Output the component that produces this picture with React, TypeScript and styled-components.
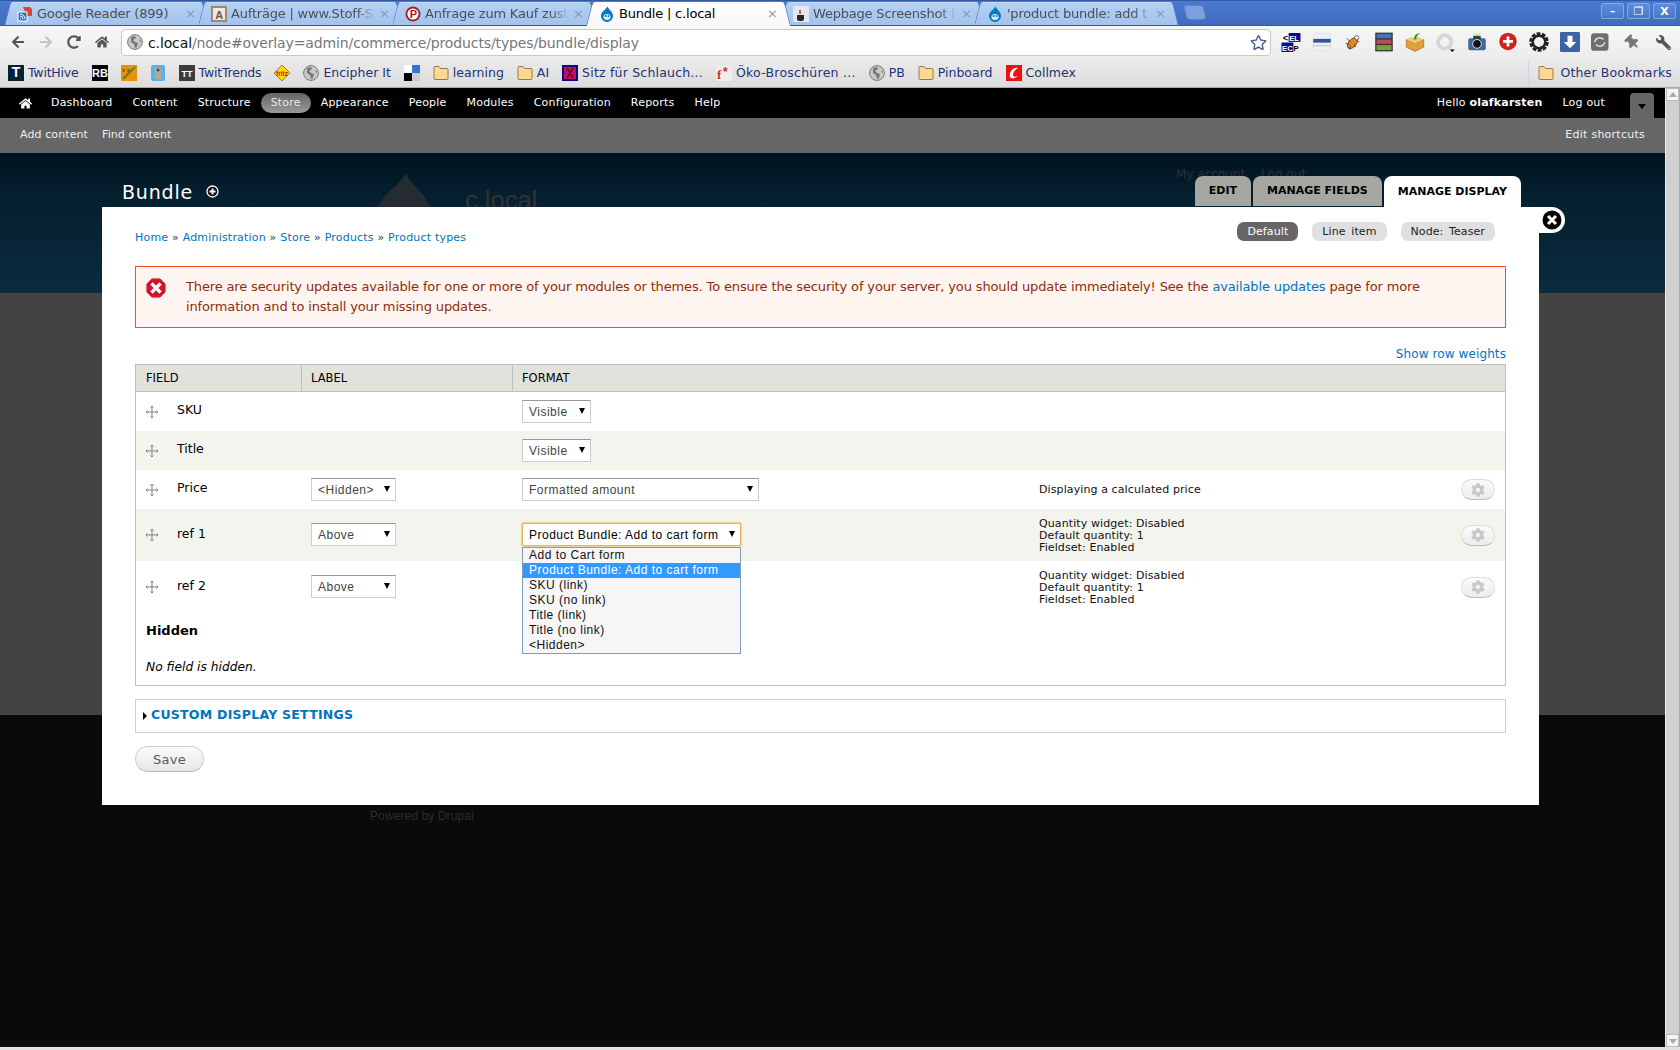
import React from "react";
import styled, { createGlobalStyle, css } from "styled-components";
import { FaHome, FaCog, FaWrench, FaThumbtack, FaArrowLeft, FaArrowRight, FaRedoAlt, FaRegStar } from "react-icons/fa";

const SANS = `"DejaVu Sans", Verdana, sans-serif`;
const ARIAL = `"Liberation Sans", Arial, sans-serif`;

const Global = createGlobalStyle`
  html, body { margin: 0; padding: 0; background: #0a0a0a; }
  * { box-sizing: border-box; }
  body { font-family: ${SANS}; overflow: hidden; }
`;

const Shell = styled.div`
  width: 1680px; height: 1050px; display: flex; flex-direction: column; overflow: hidden;
`;

/* ---------- browser chrome ---------- */
const TabStrip = styled.div`
  height: 26px; flex: none; display: flex; align-items: flex-end; padding: 0 4px 0 7px;
  background: linear-gradient(#4a79cd, #3f6cc0);
  border-top: 1px solid #2f5aa8;
  border-bottom: 1px solid #36589c;
`;
const BrowserTab = styled.div<{ $active?: boolean }>`
  width: 199px; height: 23px; margin-right: -5px; flex: none; position: relative;
  display: flex; align-items: center; gap: 4px; padding: 0 11px 0 10px;
  isolation: isolate; z-index: ${(p) => (p.$active ? 2 : 1)};
  font-size: 13px; letter-spacing: -.2px; color: ${(p) => (p.$active ? "#000" : "#4a4f58")};
  &::before, &::after {
    content: ""; position: absolute; top: 0; bottom: ${(p) => (p.$active ? "-1px" : "0")}; width: 55%; z-index: -1;
    background: ${(p) => (p.$active ? "linear-gradient(#fff, #f7f7f7)" : "linear-gradient(#b4d0f4, #a2c3ee)")};
    border-top: 1px solid ${(p) => (p.$active ? "#fff" : "#c8dcf6")};
  }
  &::before { left: 0; transform: skewX(-14deg); border-radius: 4px 0 0 0; border-left: 1px solid #5f86cc; }
  &::after { right: 0; transform: skewX(14deg); border-radius: 0 4px 0 0; border-right: 1px solid #5f86cc; }
`;
const TabLabel = styled.span<{ $fade?: boolean }>`
  flex: 1; min-width: 0; overflow: hidden; white-space: nowrap;
  ${(p) => p.$fade && css`mask-image: linear-gradient(to right, #000 88%, transparent 100%);`}
`;
const TabClose = styled.span`
  flex: none; width: 10px; text-align: center; font-size: 13px; color: #8d96a6; line-height: 1;
`;
const NewTab = styled.div`
  width: 20px; height: 15px; margin: 0 0 5px 14px; flex: none;
  background: #7c9fdd; border: 1px solid #5c82c8; border-radius: 3px 3px 4px 4px;
  transform: skewX(14deg);
`;
const WindowButtons = styled.div`
  margin-left: auto; align-self: flex-start; margin-top: 2px; display: flex; gap: 3px;
`;
const WindowButton = styled.div`
  width: 23px; height: 16px; display: flex; align-items: center; justify-content: center;
  background: linear-gradient(#5e8ed8, #4777c8); border: 1px solid #86a8e0; border-radius: 2px;
  color: #fff; font-size: 11px; font-weight: 700; line-height: 1;
`;

const Toolbar = styled.div`
  height: 32px; flex: none; display: flex; align-items: center; padding-left: 10px;
  background: linear-gradient(#f7f7f7, #ececec);
`;
const NavButton = styled.span<{ $dim?: boolean }>`
  width: 15px; margin-right: 13px; display: flex; justify-content: center;
  color: ${(p) => (p.$dim ? "#c4c4c4" : "#555")}; font-size: 14px;
`;
const Omnibox = styled.div`
  width: 1150px; height: 27px; margin-left: -1px; display: flex; align-items: center; gap: 5px; padding: 0 5px;
  background: #fff; border: 1px solid #c8c8c8; border-radius: 4px; font-size: 14px; letter-spacing: -.12px;
`;
const UrlHost = styled.span`color: #111;`;
const UrlPath = styled.span`color: #777;`;
const UrlText = styled.div`flex: 1; white-space: nowrap; padding-top: 1px;`;
const StarIcon = styled(FaRegStar)`color: #46618f; font-size: 17px; margin-right: -2px;`;
const Extensions = styled.div`margin-left: 10px; display: flex; gap: 11px; align-items: center;`;
const ExtIcon = styled.span`width: 20px; height: 20px; display: flex; align-items: center; justify-content: center; font-size: 15px;`;
const PinExt = styled(FaThumbtack)`color: #777; transform: rotate(-45deg);`;
const WrenchExt = styled(FaWrench)`color: #555; transform: scaleX(-1);`;

const BookmarkBar = styled.div`
  height: 30px; flex: none; display: flex; align-items: center; gap: 13px; padding: 0 8px;
  background: linear-gradient(#ebebeb, #dcdcdc);
  border-bottom: 1px solid #a8a8a8;
  font-size: 12.5px; color: #1d3372;
`;
const Bookmark = styled.div`display: flex; align-items: center; gap: 4px; white-space: nowrap;`;
const BookmarkLabel = styled.span<{ $sp?: number }>`letter-spacing: ${(p) => p.$sp ?? 0}px;`;
const OtherBookmarks = styled(Bookmark)`
  margin-left: auto; height: 22px; padding-left: 9px; border-left: 1px solid #ccd3e2; gap: 6px;
`;

/* ---------- page ---------- */
const Viewport = styled.div`flex: 1; min-height: 0; display: flex;`;
const PageArea = styled.div`flex: 1; min-width: 0; display: flex; flex-direction: column;`;
const AdminBar = styled.div`
  height: 30px; flex: none; background: #000; color: #fff; font-size: 11px; letter-spacing: .2px;
  display: flex; align-items: center;
`;
const AdminHome = styled.span`display: flex; width: 14px; margin: 0 8px 0 19px; font-size: 13px;`;
const AdminLink = styled.span<{ $active?: boolean }>`
  padding: 0 10px 1px; height: 20px; display: flex; align-items: center; white-space: nowrap;
  border-radius: 10px;
  ${(p) => p.$active && css`background: linear-gradient(#666, #999); color: #e8e8e8;`}
`;
const AdminRight = styled.div`margin-left: auto; display: flex; align-items: center; height: 100%;`;
const AdminUser = styled.span`padding: 0 10px 2px;`;
const AdminDrop = styled.div`
  width: 24px; height: 25px; margin: 5px 11px 0 15px; background: #666; border-radius: 4px 4px 0 0;
  display: flex; align-items: center; justify-content: center;
  &::after { content: ""; border: 4px solid transparent; border-top: 5px solid #000; margin-top: 5px; }
`;
const ShortcutBar = styled.div`
  height: 35px; flex: none; background: #666; color: #f0f0f0; font-size: 11px; letter-spacing: .1px;
  display: flex; align-items: center; gap: 14px; padding: 0 20px 2px;
`;
const ShortcutEdit = styled.span`margin-left: auto; letter-spacing: .25px;`;

const Backdrop = styled.div`flex: 1; min-height: 0; position: relative; display: flex; flex-direction: column;`;
const SiteHeader = styled.div`
  height: 140px; flex: none; display: flex; align-items: flex-start; padding-left: 375px;
  background: linear-gradient(#00121f 0%, #05202f 30%, #0b2b3f 100%);
`;
const SiteLogo = styled.svg`width: 58px; height: 66px; margin-top: 20px; flex: none;`;
const SiteName = styled.div`
  margin: 33px 0 0 32px; font-family: ${ARIAL}; font-size: 25.5px; line-height: 28px; color: #333;
`;
const SecondaryLinks = styled.div`
  margin: 14px 0 0 auto; padding-right: 359px; display: flex; gap: 16px; font-size: 12px; line-height: 14px; color: #303030;
`;
const SiteBody = styled.div`height: 422px; flex: none; background: #434343;`;
const SiteFooter = styled.div`
  flex: 1; background: #0a0a0a; padding: 94px 0 0 370px;
  font-family: ${ARIAL}; font-size: 12px; line-height: 14px; letter-spacing: .1px; color: #2b2b2b;
`;

const Overlay = styled.div`
  position: absolute; left: 102px; top: 23px; width: 1437px; display: flex; flex-direction: column;
`;
const OverlayHead = styled.div`
  height: 31px; display: flex; justify-content: space-between; align-items: flex-end; padding: 0 18px 0 20px;
`;
const PageTitle = styled.div`
  display: flex; align-items: center; gap: 13px; align-self: center;
  font-size: 19px; letter-spacing: .8px; color: #fff; line-height: 24px;
`;
const OverlayTabs = styled.div`display: flex; gap: 2px; align-items: flex-end;`;
const OverlayTab = styled.div<{ $active?: boolean }>`
  height: ${(p) => (p.$active ? "31px" : "30px")}; margin-bottom: ${(p) => (p.$active ? "0" : "1px")};
  padding: 0 14px 1px; display: flex; align-items: center; border-radius: 8px 8px 0 0;
  font-size: 11px; font-weight: 700; color: #000; white-space: nowrap;
  background: ${(p) => (p.$active ? "#fff" : "#a6a7a2")};
`;

const Modal = styled.div`
  position: relative; background: #fff; padding: 0 33px 33px; font-size: 13px; color: #000;
`;
const CloseTab = styled.div`
  position: absolute; left: 100%; top: 0; width: 26px; height: 26px; background: #fff;
  border-radius: 0 13px 13px 0; display: flex; align-items: center; padding-left: 3px;
`;
const ModalHead = styled.div`
  height: 59px; padding: 15px 11px 0 0; display: flex; justify-content: space-between; align-items: flex-start;
`;
const Breadcrumb = styled.div`
  margin-top: 8px; font-size: 11px; line-height: 16px; color: #333; letter-spacing: .2px;
`;
const Link = styled.a`color: #0074bd; text-decoration: none;`;
const Pills = styled.div`display: flex; gap: 14px;`;
const Pill = styled.div<{ $active?: boolean }>`
  height: 19px; padding: 0 10px; display: flex; align-items: center; border-radius: 7px;
  font-size: 11px; letter-spacing: .1px; word-spacing: 2px;
  background: ${(p) => (p.$active ? "#666" : "#e0e0e0")}; color: ${(p) => (p.$active ? "#fff" : "#222")};
`;
const ErrorBox = styled.div`
  height: 62px; display: flex; gap: 19px; padding: 10px 60px 10px 9px;
  background: #fef5f1; border: 1px solid #ed541d; color: #8c2e0b;
  font-size: 13px; line-height: 20px; letter-spacing: -.14px;
`;
const ErrorText = styled.div`flex: 1;`;
const ErrorIcon = styled.svg`width: 22px; height: 22px; flex: none;`;
const WeightsRow = styled.div`
  margin: 18px 0 2px; text-align: right; font-size: 12px; line-height: 16px; letter-spacing: .1px;
`;
const TableBox = styled.div`border: 1px solid #bebfb9;`;
const GRID = "165px 211px 517px 1fr 54px";
const HeadRow = styled.div`
  height: 27px; display: grid; grid-template-columns: 165px 211px 1fr; background: #e1e2dc;
  border-bottom: 1px solid #bebfb9;
`;
const HeadCell = styled.div`
  padding: 0 10px; display: flex; align-items: center; font-size: 11.5px;
  & + & { border-left: 1px solid #bebfb9; padding-left: 9px; }
`;
const Row = styled.div<{ $even?: boolean }>`
  display: grid; grid-template-columns: ${GRID}; align-items: center; padding: 8px 0;
  background: ${(p) => (p.$even ? "#f3f4ee" : "#fff")};
`;
const FieldCell = styled.div`
  display: flex; align-items: center; padding-left: 9px; gap: 18px; font-size: 12.5px;
`;
const FieldName = styled.span`margin-top: -4px;`;
const Cell = styled.div<{ $tall?: boolean }>`
  padding-left: 10px;
  ${(p) => p.$tall && css`padding-bottom: 1px;`}
`;
const Summary = styled.div<{ $tall?: boolean }>`
  padding-left: 10px; font-size: 11px; line-height: 12px; color: #111; letter-spacing: .1px;
  ${(p) => p.$tall && css`padding-top: 1px; margin-bottom: -1px;`}
`;
const GearCell = styled.div`display: flex; justify-content: flex-end; padding-right: 10px;`;
const GearButton = styled.div`
  width: 34px; height: 21px; border-radius: 11px; display: flex; align-items: center; justify-content: center;
  background: linear-gradient(#fbfbfb, #ececec); border: 1px solid #dcdcdc; border-bottom-color: #bbb;
  color: #c8c8c8; font-size: 14px;
`;
const SelectWrap = styled.div<{ $w: number }>`position: relative; width: ${(p) => p.$w}px;`;
const SelectBox = styled.div<{ $focus?: boolean }>`
  height: 23px; display: flex; align-items: center; justify-content: space-between;
  padding: 0 6px; background: #fff; font-family: ${ARIAL}; font-size: 12px; white-space: nowrap; letter-spacing: .5px;
  border: 1px solid #ccc; border-top-color: #999;
  color: ${(p) => (p.$focus ? "#000" : "#444")};
  ${(p) => p.$focus && css`border-color: #e0b860; box-shadow: 0 0 1px 1px #ecd08c; border-radius: 2px;`}
  &::after { content: ""; flex: none; border: 3.5px solid transparent; border-top: 6px solid #000; border-bottom: 0; margin-bottom: 2px; margin-right: -1px; }
`;
const Dropdown = styled.div`
  position: absolute; z-index: 5; left: 0; top: 100%; width: 100%; margin-top: 1px;
  background: #f6f6f6; border: 1px solid #7f9db9; font-family: ${ARIAL}; font-size: 12px; letter-spacing: .5px; color: #111;
`;
const Option = styled.div<{ $selected?: boolean }>`
  height: 15px; line-height: 15px; padding: 0 5px 0 6px; white-space: nowrap;
  ${(p) => p.$selected && css`background: #3399ff; color: #fff;`}
`;
const HiddenBlock = styled.div`padding: 8px 10px 8px; font-size: 13px; line-height: 20px;`;
const HiddenTitle = styled.div`font-weight: 700;`;
const HiddenNote = styled.div`margin-top: 16px; font-style: italic; font-size: 12.25px;`;
const Fieldset = styled.div`
  margin-top: 13px; height: 34px; border: 1px solid #ccc; display: flex; align-items: center; gap: 4px; padding: 0 0 4px 7px;
`;
const Caret = styled.span`border: 4px solid transparent; border-left: 4px solid #000; border-right: 0; flex: none; margin-top: 3px;`;
const FieldsetLink = styled(Link)`font-size: 12.5px; font-weight: 700; letter-spacing: .25px;`;
const SaveButton = styled.div`
  margin-top: 13px; width: 69px; height: 26px; border-radius: 13px; display: flex; align-items: center; justify-content: center;
  background: linear-gradient(#fbfbfb, #e6e6e6); border: 1px solid #d0d0d0; border-bottom-color: #b8b8b8;
  color: #5a5a5a; font-size: 13px; letter-spacing: .3px;
`;

const Scrollbar = styled.div`
  width: 15px; flex: none; display: flex; flex-direction: column; background: #d0d0d0;
  border-left: 1px solid #ececec; border-right: 1px solid #aaa;
`;
const ScrollButton = styled.div<{ $down?: boolean }>`
  height: 13px; background: #f4f4f4; border: 1px solid #bbb; flex: none; display: flex; align-items: center; justify-content: center;
  &::after { content: ""; border: 4px solid transparent;
    ${(p) => (p.$down ? "border-top: 5px solid #aaa; margin-top: 5px;" : "border-bottom: 5px solid #aaa; margin-bottom: 5px;")} }
`;
const ScrollTrack = styled.div`flex: 1;`;
const FooterStrip = styled.div`height: 3px; flex: none; background: #e2e2e2;`;

/* ---------- icons ---------- */
const Ico: React.FC<{ children: React.ReactNode; w?: number; h?: number }> = ({ children, w = 16, h = 16 }) => (
  <svg width={w} height={h} viewBox="0 0 16 16" style={{ flex: "none", display: "block" }}>{children}</svg>
);
const Drop = ({ size = 16 }: { size?: number }) => (
  <Ico w={size} h={size}>
    <path d="M8.5 .5C9.5 3.5 14 5.500 14 10a6 6 0 0 1-12 0C2 5.500 7 3.500 8.500 .5Z" fill="#0678be" />
    <ellipse cx="8" cy="11" rx="3.600" ry="3" fill="#d8ecf8" />
    <circle cx="6.700" cy="10" r="1" fill="#0678be" /><circle cx="9.500" cy="10" r="1" fill="#0678be" />
  </Ico>
);
const Globe = () => (
  <Ico>
    <circle cx="8" cy="8" r="7.400" fill="#c9c9c9" stroke="#777" />
    <path d="M4 3l4-1 1 2-3 2 2 2 3 1-1 4-2 1-1-4-3-2zM12 5l2 2-1 1z" fill="#777" />
  </Ico>
);
const Folder = () => (
  <Ico>
    <path d="M1 4.500V13.500a1 1 0 0 0 1 1h12a1 1 0 0 0 1-1V4.500a1 1 0 0 0-1-1H7.500L6 1.500H2a1 1 0 0 0-1 1z" fill="#fcd893" stroke="#987a45" />
  </Ico>
);
const Tile: React.FC<{ bg: string; fg?: string; t: string; fs?: number }> = ({ bg, fg = "#fff", t, fs = 11 }) => (
  <Ico>
    <rect x="0" y="0" width="16" height="16" fill={bg} />
    <text x="8" y="12" textAnchor="middle" fontSize={fs} fontWeight="700" fontFamily="Liberation Sans" fill={fg}>{t}</text>
  </Ico>
);
const ReaderIcon = () => (
  <Ico>
    <path d="M6 1h7l2 2v7h-5z" fill="#e2432f" />
    <rect x="1" y="6" width="9" height="9" fill="#2b74c8" stroke="#fff" />
    <path d="M3 13h1M3 10a3 3 0 0 1 3 3M3 8a5 5 0 0 1 5 5" stroke="#fff" fill="none" />
  </Ico>
);
const AIcon = () => (
  <Ico>
    <rect width="16" height="16" fill="#a08870" />
    <rect x="2" y="2" width="12" height="12" fill="#efeadf" />
    <text x="8" y="12.500" textAnchor="middle" fontSize="11" fontWeight="700" fontFamily="Liberation Sans" fill="#6d5640">A</text>
  </Ico>
);
const PinIcon = () => (
  <Ico>
    <circle cx="8" cy="8" r="7.500" fill="#a51c30" />
    <circle cx="8" cy="8" r="5.600" fill="#fff" />
    <text x="8.300" y="12" textAnchor="middle" fontSize="11" fontWeight="700" fontFamily="Liberation Sans" fill="#a51c30">P</text>
  </Ico>
);
const CupIcon = () => (
  <Ico>
    <rect width="16" height="16" fill="#e4e7ee" />
    <path d="M4 9h7v4a2 2 0 0 1-2 2H6a2 2 0 0 1-2-2z" fill="#2c2420" />
    <path d="M7 8V4" stroke="#a33" strokeWidth="1.500" />
  </Ico>
);
const OwlIcon = () => (
  <Ico>
    <rect x="1" y="0" width="14" height="16" rx="2" fill="#58b4e8" />
    <path d="M5 3h6v11H5z" fill="#b9a98c" />
    <circle cx="8" cy="5" r="1.500" fill="#445" />
  </Ico>
);
const SwordIcon = () => (
  <Ico>
    <rect width="16" height="16" fill="#e8920c" />
    <path d="M2 14L14 2" stroke="#6a7a20" strokeWidth="2" />
    <text x="1" y="7" fontSize="6" fontFamily="Liberation Sans" fill="#222">x x</text>
  </Ico>
);
const FritzIcon = () => (
  <Ico>
    <path d="M8 0l8 8-8 8-8-8z" fill="#ffd800" stroke="#333" strokeWidth=".5" />
    <text x="8" y="10.500" textAnchor="middle" fontSize="6.500" fontWeight="700" fontFamily="Liberation Sans" fill="#d01818">fritz</text>
  </Ico>
);
const DeliciousIcon = () => (
  <Ico>
    <rect x="8" width="8" height="8" fill="#3274d1" />
    <rect y="8" width="8" height="8" fill="#000" />
    <rect x="8" y="8" width="8" height="8" fill="#ccc" />
    <rect width="8" height="8" fill="#fff" />
  </Ico>
);
const HourglassIcon = () => (
  <Ico>
    <rect width="16" height="16" fill="#0a0a80" />
    <rect x="2" y="2" width="12" height="12" fill="#c01060" />
    <path d="M5 3l6 10M11 3L5 13" stroke="#600830" strokeWidth="1.500" />
  </Ico>
);
const FStarIcon = () => (
  <Ico>
    <rect width="16" height="16" fill="#eee" />
    <text x="1" y="14" fontSize="13" fontWeight="700" fontFamily="Liberation Serif" fill="#c32">f</text>
    <text x="7" y="11" fontSize="12" fontWeight="700" fontFamily="Liberation Sans" fill="#d22">*</text>
  </Ico>
);
const CollmexIcon = () => (
  <Ico>
    <rect width="16" height="16" fill="#f01010" />
    <path d="M12 3C7 2 3 7 4 12c1 2 5 2 8-1-3 1-5 1-5-1 0-3 2-5 5-7z" fill="#fff" />
  </Ico>
);
const SelectIcon = () => (
  <Ico w={20} h={19}>
    <rect x="0" y="0" width="16" height="8" fill="#fff" />
    <rect x="6" y="0" width="10" height="7.500" fill="#0a0a90" />
    <text x="1" y="7" fontSize="7.500" fontWeight="700" fontFamily="Liberation Mono" fill="#000">&lt;</text>
    <text x="6.500" y="6.500" fontSize="6.500" fontWeight="700" fontFamily="Liberation Sans" fill="#fff">EL</text>
    <rect x="0" y="8" width="10" height="8" fill="#0a0a90" />
    <text x=".5" y="15" fontSize="6.500" fontWeight="700" fontFamily="Liberation Sans" fill="#fff">EC</text>
    <text x="10" y="15" fontSize="6.500" fontWeight="700" fontFamily="Liberation Sans" fill="#000">P</text>
  </Ico>
);
const StripeIcon = () => (
  <Ico w={20} h={20}>
    <rect x="1" y="1" width="14" height="14" rx="1.500" fill="#f0f0f0" stroke="#ddd" strokeWidth=".6" />
    <rect x="1" y="5.500" width="14" height="3" fill="#2c55a8" />
    <path d="M1 11h14" stroke="#ccc" />
  </Ico>
);
const BugIcon = () => (
  <Ico w={20} h={20}>
    <ellipse cx="7.500" cy="9" rx="3" ry="5" transform="rotate(40 7.500 9)" fill="#e0872a" stroke="#6a3a10" strokeWidth=".7" />
    <circle cx="11" cy="4.500" r="1.700" fill="#eee" stroke="#333" strokeWidth=".5" />
    <path d="M3 5l3 3M2 9l3 1M5 14l1-3M10 12l-1-2M13 8l-2-1" stroke="#5a3010" strokeWidth=".6" />
  </Ico>
);
const BooksIcon = () => (
  <Ico w={20} h={20}>
    <rect x="1" y="0.500" width="14" height="15" fill="#333" />
    <rect x="2" y="1.500" width="12" height="3.500" fill="#3a78b8" />
    <rect x="2" y="6" width="12" height="3.500" fill="#c2485e" />
    <rect x="2" y="10.500" width="12" height="4" fill="#7da23a" />
  </Ico>
);
const BoxIcon = () => (
  <Ico w={20} h={20}>
    <path d="M1 6l7 3 7-3v6l-7 3.500L1 12z" fill="#e2a03c" stroke="#a86e20" strokeWidth=".6" />
    <path d="M1 6l4-2 3 1 3-1 4 2-7 3z" fill="#f1c87a" />
    <path d="M7 6c0-3 2-5 5-5-2 1-3 3-3 5z" fill="#3a9a2a" />
  </Ico>
);
const RingIcon = () => (
  <Ico w={20} h={20}>
    <circle cx="7" cy="8" r="5.300" fill="none" stroke="#d6d6d6" strokeWidth="3" />
    <path d="M11 14h4l-2 2z" fill="#000" />
  </Ico>
);
const CameraIcon = () => (
  <Ico w={20} h={20}>
    <path d="M5 1l3 1 3-1" stroke="#f0dc70" fill="none" />
    <rect x="1" y="5" width="14" height="9.500" rx="1.500" fill="#3f6a98" />
    <rect x="5" y="3" width="6" height="3" fill="#27405e" />
    <circle cx="8" cy="9.500" r="3.500" fill="#111" stroke="#dde" strokeWidth=".8" />
  </Ico>
);
const PlusIcon = () => (
  <Ico w={20} h={20}>
    <circle cx="8" cy="7.500" r="7" fill="#d3221a" />
    <path d="M8 3.500v8M4 7.500h8" stroke="#fff" strokeWidth="2.200" />
  </Ico>
);
const RingGear = () => (
  <Ico w={20} h={20}>
    <circle cx="8" cy="8" r="6.600" fill="none" stroke="#222" strokeWidth="2.400" strokeDasharray="3 1.150" />
    <circle cx="8" cy="8" r="5" fill="none" stroke="#222" strokeWidth="2" />
    <circle cx="8" cy="8" r="2.300" fill="#eee" />
  </Ico>
);
const DownloadIcon = () => (
  <Ico w={20} h={20}>
    <rect x="0" y="0" width="16" height="16" rx="1" fill="#3c62a8" />
    <path d="M6 3h4v5h3l-5 5-5-5h3z" fill="#fff" />
  </Ico>
);
const SyncIcon = () => (
  <Ico w={20} h={20}>
    <rect x="0" y="1" width="14" height="14" rx="2.500" fill="#6e6e6e" />
    <path d="M3 8a4 4 0 0 1 7-2M11 8a4 4 0 0 1-7 2" stroke="#ddd" fill="none" strokeWidth="1.300" />
    <path d="M2 9h8" stroke="#6e6e6e" strokeWidth=".8" />
  </Ico>
);
const MoveHandle = () => (
  <Ico w={14} h={14}>
    <g transform="scale(1.140)" fill="none" stroke="#808080" strokeWidth="1">
      <path d="M7 1v12M1 7h12" />
      <path d="M5.500 2.500L7 1l1.500 1.500M5.500 11.500L7 13l1.500-1.500M2.500 5.500L1 7l1.500 1.500M11.500 5.500L13 7l-1.500 1.500" />
    </g>
  </Ico>
);

/* ---------- data ---------- */
const tabs: { icon: React.ReactNode; label: string; fade?: boolean; active?: boolean }[] = [
  { icon: <ReaderIcon />, label: "Google Reader (899)" },
  { icon: <AIcon />, label: "Aufträge | www.Stoff-S", fade: true },
  { icon: <PinIcon />, label: "Anfrage zum Kauf zust", fade: true },
  { icon: <Drop />, label: "Bundle | c.local", active: true },
  { icon: <CupIcon />, label: "Wepbage Screenshot i", fade: true },
  { icon: <Drop />, label: "'product bundle: add t", fade: true },
];
const bookmarks: { icon: React.ReactNode; label?: string; sp?: number }[] = [
  { icon: <Tile bg="#06223a" t="T" fs={14} />, label: "TwitHive", sp: -0.2 },
  { icon: <Tile bg="#000" t="RB" fs={11} /> },
  { icon: <SwordIcon /> },
  { icon: <OwlIcon /> },
  { icon: <Tile bg="#3c3c3c" t="TT" fs={9} />, label: "TwitTrends", sp: -0.2 },
  { icon: <FritzIcon /> },
  { icon: <Globe />, label: "Encipher It" },
  { icon: <DeliciousIcon /> },
  { icon: <Folder />, label: "learning" },
  { icon: <Folder />, label: "AI" },
  { icon: <HourglassIcon />, label: "Sitz für Schlauch...", sp: 0.2 },
  { icon: <FStarIcon />, label: "Öko-Broschüren ...", sp: 0.25 },
  { icon: <Globe />, label: "PB" },
  { icon: <Folder />, label: "Pinboard" },
  { icon: <CollmexIcon />, label: "Collmex" },
];
const adminLinks = ["Dashboard", "Content", "Structure", "Store", "Appearance", "People", "Modules", "Configuration", "Reports", "Help"];
const options = ["Add to Cart form", "Product Bundle: Add to cart form", "SKU (link)", "SKU (no link)", "Title (link)", "Title (no link)", "<Hidden>"];
const bundleSummary = ["Quantity widget: Disabled", "Default quantity: 1", "Fieldset: Enabled"];
const rows: {
  name: string; label?: string; format: string; fw: number; summary?: string[]; open?: boolean;
}[] = [
  { name: "SKU", format: "Visible", fw: 69 },
  { name: "Title", format: "Visible", fw: 69 },
  { name: "Price", label: "<Hidden>", format: "Formatted amount", fw: 237, summary: ["Displaying a calculated price"] },
  { name: "ref 1", label: "Above", format: "Product Bundle: Add to cart form", fw: 219, summary: bundleSummary, open: true },
  { name: "ref 2", label: "Above", format: "Product Bundle: Add to cart form", fw: 219, summary: bundleSummary },
];

export default function App() {
  return (
    <Shell>
      <Global />
      <TabStrip>
        {tabs.map((t) => (
          <BrowserTab key={t.label} $active={t.active}>
            {t.icon}
            <TabLabel $fade={t.fade}>{t.label}</TabLabel>
            <TabClose>×</TabClose>
          </BrowserTab>
        ))}
        <NewTab />
        <WindowButtons>
          <WindowButton>–</WindowButton>
          <WindowButton>❐</WindowButton>
          <WindowButton>X</WindowButton>
        </WindowButtons>
      </TabStrip>

      <Toolbar>
        <NavButton><FaArrowLeft /></NavButton>
        <NavButton $dim><FaArrowRight /></NavButton>
        <NavButton><FaRedoAlt /></NavButton>
        <NavButton><FaHome /></NavButton>
        <Omnibox>
          <Globe />
          <UrlText><UrlHost>c.local</UrlHost><UrlPath>/node#overlay=admin/commerce/products/types/bundle/display</UrlPath></UrlText>
          <StarIcon />
        </Omnibox>
        <Extensions>
          <SelectIcon /><StripeIcon /><BugIcon /><BooksIcon /><BoxIcon /><RingIcon /><CameraIcon /><PlusIcon /><RingGear /><DownloadIcon /><SyncIcon />
          <ExtIcon><PinExt /></ExtIcon>
          <ExtIcon><WrenchExt /></ExtIcon>
        </Extensions>
      </Toolbar>

      <BookmarkBar>
        {bookmarks.map((b, i) => (
          <Bookmark key={i}>{b.icon}{b.label && <BookmarkLabel $sp={b.sp}>{b.label}</BookmarkLabel>}</Bookmark>
        ))}
        <OtherBookmarks><Folder /><BookmarkLabel $sp={0.15}>Other Bookmarks</BookmarkLabel></OtherBookmarks>
      </BookmarkBar>

      <Viewport>
        <PageArea>
          <AdminBar>
            <AdminHome><FaHome /></AdminHome>
            {adminLinks.map((l) => <AdminLink key={l} $active={l === "Store"}>{l}</AdminLink>)}
            <AdminRight>
              <AdminUser>Hello <b>olafkarsten</b></AdminUser>
              <AdminUser>Log out</AdminUser>
              <AdminDrop />
            </AdminRight>
          </AdminBar>
          <ShortcutBar>
            <span>Add content</span><span>Find content</span>
            <ShortcutEdit>Edit shortcuts</ShortcutEdit>
          </ShortcutBar>
          <Backdrop>
            <SiteHeader>
              <SiteLogo viewBox="0 0 58 66">
                <path d="M31 0c3 12 25 22 25 42a27 27 0 0 1-54 0C2 22 25 14 31 0Z" fill="#242c32" />
              </SiteLogo>
              <SiteName>c.local</SiteName>
              <SecondaryLinks><span>My account</span><span>Log out</span></SecondaryLinks>
            </SiteHeader>
            <SiteBody />
            <SiteFooter>Powered by Drupal</SiteFooter>
            <Overlay>
              <OverlayHead>
                <PageTitle>
                  Bundle
                  <svg width="13" height="13" viewBox="0 0 13 13">
                    <circle cx="6.500" cy="6.500" r="5.500" fill="#111" stroke="#fff" strokeWidth="1.300" />
                    <path d="M6.500 3.500v6M3.500 6.500h6" stroke="#fff" strokeWidth="1.800" />
                  </svg>
                </PageTitle>
                <OverlayTabs>
                  <OverlayTab>EDIT</OverlayTab>
                  <OverlayTab>MANAGE FIELDS</OverlayTab>
                  <OverlayTab $active>MANAGE DISPLAY</OverlayTab>
                </OverlayTabs>
              </OverlayHead>
              <Modal>
                <CloseTab>
                  <svg width="20" height="20" viewBox="0 0 20 20">
                    <circle cx="10" cy="10" r="9.500" fill="#000" />
                    <path d="M6 6l8 8M14 6l-8 8" stroke="#fff" strokeWidth="3" />
                  </svg>
                </CloseTab>
                <ModalHead>
                  <Breadcrumb>
                    <Link>Home</Link> » <Link>Administration</Link> » <Link>Store</Link> » <Link>Products</Link> » <Link>Product types</Link>
                  </Breadcrumb>
                  <Pills>
                    <Pill $active>Default</Pill>
                    <Pill>Line item</Pill>
                    <Pill>Node: Teaser</Pill>
                  </Pills>
                </ModalHead>
                <ErrorBox>
                  <ErrorIcon viewBox="0 0 22 22">
                    <path d="M7 1h8l6 6v8l-6 6H7l-6-6V7z" fill="#d2152a" stroke="#ddd" strokeLinejoin="round" />
                    <path d="M6.500 6.500l9 9M15.500 6.500l-9 9" stroke="#fff" strokeWidth="3.200" />
                  </ErrorIcon>
                  <ErrorText>
                    There are security updates available for one or more of your modules or themes. To ensure the security of your server, you should update immediately! See the <Link>available updates</Link> page for more information and to install your missing updates.
                  </ErrorText>
                </ErrorBox>
                <WeightsRow><Link>Show row weights</Link></WeightsRow>
                <TableBox>
                  <HeadRow>
                    <HeadCell>FIELD</HeadCell>
                    <HeadCell>LABEL</HeadCell>
                    <HeadCell>FORMAT</HeadCell>
                  </HeadRow>
                  {rows.map((r, i) => {
                    const tall = (r.summary?.length ?? 0) > 1;
                    return (
                      <Row key={r.name} $even={i % 2 === 1}>
                        <FieldCell><MoveHandle /><FieldName>{r.name}</FieldName></FieldCell>
                        <Cell $tall={tall}>{r.label && <SelectWrap $w={85}><SelectBox>{r.label}</SelectBox></SelectWrap>}</Cell>
                        <Cell $tall={tall}>
                          <SelectWrap $w={r.fw}>
                            <SelectBox $focus={r.open}>{r.format}</SelectBox>
                            {r.open && (
                              <Dropdown>
                                {options.map((o) => <Option key={o} $selected={o === r.format}>{o}</Option>)}
                              </Dropdown>
                            )}
                          </SelectWrap>
                        </Cell>
                        <Summary $tall={tall}>{r.summary?.map((s) => <div key={s}>{s}</div>)}</Summary>
                        <GearCell>{r.summary && <GearButton><FaCog /></GearButton>}</GearCell>
                      </Row>
                    );
                  })}
                  <HiddenBlock>
                    <HiddenTitle>Hidden</HiddenTitle>
                    <HiddenNote>No field is hidden.</HiddenNote>
                  </HiddenBlock>
                </TableBox>
                <Fieldset><Caret /><FieldsetLink>CUSTOM DISPLAY SETTINGS</FieldsetLink></Fieldset>
                <SaveButton>Save</SaveButton>
              </Modal>
            </Overlay>
          </Backdrop>
        </PageArea>
        <Scrollbar>
          <ScrollButton />
          <ScrollTrack />
          <ScrollButton $down />
        </Scrollbar>
      </Viewport>
      <FooterStrip />
    </Shell>
  );
}
